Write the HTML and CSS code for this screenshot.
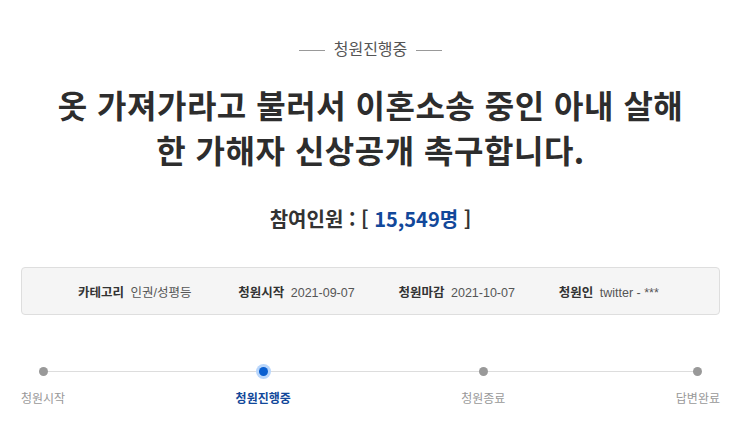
FILE: index.html
```html
<!DOCTYPE html>
<html lang="ko">
<head>
  <meta charset="utf-8">
  <title>청원진행중</title>
  <link rel="stylesheet" href="styles.css">
</head>
<body>
  <div class="petition">
    <p class="status-tag"><span>청원진행중</span></p>

    <h1 class="petition-title">옷 가져가라고 불러서 이혼소송 중인 아내 살해<br>한 가해자 신상공개 촉구합니다.</h1>

    <h2 class="counter">참여인원 : [ <span class="counter-num">15,549명</span> ]</h2>

    <ul class="info-box">
      <li><strong>카테고리</strong> 인권/성평등</li>
      <li><strong>청원시작</strong> 2021-09-07</li>
      <li><strong>청원마감</strong> 2021-10-07</li>
      <li><strong>청원인</strong> twitter - ***</li>
    </ul>

    <ol class="steps">
      <li class="step"><i class="dot"></i><span>청원시작</span></li>
      <li class="step on"><i class="dot"></i><span>청원진행중</span></li>
      <li class="step"><i class="dot"></i><span>청원종료</span></li>
      <li class="step"><i class="dot"></i><span>답변완료</span></li>
    </ol>
  </div>
</body>
</html>
```

FILE: styles.css
```css
/* 기본 */
* {
  margin: 0;
  padding: 0;
  box-sizing: border-box;
}

body {
  font-family: 'Liberation Sans', 'Noto Sans CJK KR', sans-serif;
  background: #fff;
  color: #333;
}

.petition {
  width: 699px;
  margin-left: 21px;
  padding-top: 38px;
  text-align: center;
}

/* 상단 상태 */
.status-tag {
  display: flex;
  justify-content: center;
  align-items: center;
  gap: 9px;
  font-size: 16px;
  line-height: 24px;
  color: #555;
}

.status-tag::before,
.status-tag::after {
  content: '';
  width: 26px;
  height: 1px;
  background: #999;
}

.petition-title {
  margin-top: 20px;
  font-family: 'Noto Sans CJK KR', sans-serif;
  font-size: 32px;
  font-weight: 700;
  line-height: 45px;
  letter-spacing: 0.5px;
  color: #2d2d2d;
}

.counter {
  margin-top: 33px;
  font-family: 'Noto Sans CJK KR', sans-serif;
  font-size: 20px;
  font-weight: 700;
  line-height: 28px;
  color: #333;
}

.counter-num {
  color: #12489a;
}

/* 정보 박스 */
.info-box {
  list-style: none;
  display: flex;
  margin-top: 34px;
  height: 48px;
  padding-left: 56px;
  align-items: center;
  background: #f5f5f5;
  border: 1px solid #dedede;
  border-radius: 4px;
  font-size: 12.5px;
  color: #555;
  text-align: left;
}

.info-box li {
  width: 161px;
  white-space: nowrap;
}

.info-box strong {
  color: #333;
  margin-right: 3px;
}

/* 진행 단계 */
.steps {
  list-style: none;
  position: relative;
  display: flex;
  justify-content: space-between;
  margin-top: 52px;
  font-family: 'Noto Sans CJK KR', sans-serif;
  font-size: 12px;
  color: #999;
}

.steps::before {
  content: '';
  position: absolute;
  left: 24px;
  right: 24px;
  top: 4px;
  height: 1px;
  background: #ddd;
}

.step {
  position: relative;
  display: flex;
  flex-direction: column;
  align-items: center;
  gap: 13px;
}

.dot {
  width: 9px;
  height: 9px;
  border-radius: 50%;
  background: #999;
}

.step.on {
  color: #12489a;
  font-weight: 700;
}

.step.on .dot {
  background: #0a5fd0;
  box-shadow: 0 0 0 3px #b9d6fb;
}
```
